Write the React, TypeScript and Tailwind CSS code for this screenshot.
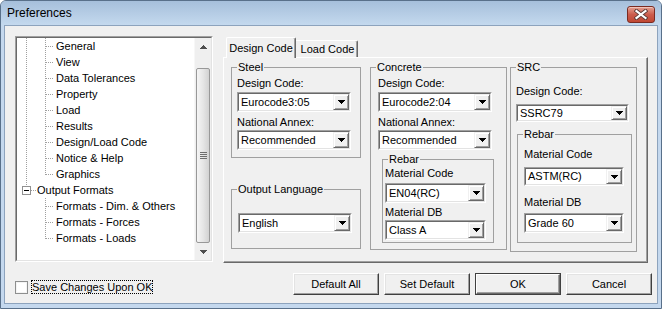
import React from "react";

const treeItems = [
  { label: "General", root: false, parentLine: true, last: false },
  { label: "View", root: false, parentLine: true, last: false },
  { label: "Data Tolerances", root: false, parentLine: true, last: false },
  { label: "Property", root: false, parentLine: true, last: false },
  { label: "Load", root: false, parentLine: true, last: false },
  { label: "Results", root: false, parentLine: true, last: false },
  { label: "Design/Load Code", root: false, parentLine: true, last: false },
  { label: "Notice & Help", root: false, parentLine: true, last: false },
  { label: "Graphics", root: false, parentLine: true, last: true },
  { label: "Output Formats", root: true, parentLine: false, last: true },
  { label: "Formats - Dim. & Others", root: false, parentLine: false, last: false },
  { label: "Formats - Forces", root: false, parentLine: false, last: false },
  { label: "Formats - Loads", root: false, parentLine: false, last: true },
];

const DOT = "#a0a0a0";

// tree connector drawing for one row
const TreeLines = ({ item }: { item: any }) => {
  if (item.root) {
    return (
      <svg width="20" height="16" className="shrink-0" shapeRendering="crispEdges">
        <line x1="9.5" y1="0" x2="9.5" y2="4" stroke={DOT} strokeDasharray="1 1" />
        <rect x="5.5" y="4.5" width="8" height="8" fill="#fff" stroke="#919191" />
        <line x1="7" y1="8.5" x2="12" y2="8.5" stroke="#000" />
        <line x1="14" y1="8.5" x2="19" y2="8.5" stroke={DOT} strokeDasharray="1 1" />
      </svg>
    );
  }
  return (
    <svg width="39" height="16" className="shrink-0" shapeRendering="crispEdges">
      {item.parentLine && (
        <line x1="9.5" y1="0" x2="9.5" y2="16" stroke={DOT} strokeDasharray="1 1" />
      )}
      <line x1="28.5" y1="0" x2="28.5" y2={item.last ? 9 : 16} stroke={DOT} strokeDasharray="1 1" />
      <line x1="29" y1="8.5" x2="37" y2="8.5" stroke={DOT} strokeDasharray="1 1" />
    </svg>
  );
};

const Arrow = ({ up = false, color = "#000" }: { up?: boolean; color?: string }) => (
  <svg width="7" height="4" shapeRendering="crispEdges">
    {up ? (
      <path d="M3 0h1v1h1v1h1v1h1v1H0V3h1V2h1V1h1z" fill={color} />
    ) : (
      <path d="M0 0h7v1H6v1H5v1H4v1H3V3H2V2H1V1H0z" fill={color} />
    )}
  </svg>
);

const Combo = ({ text, size }: { text: string; size: string }) => (
  <div className={`flex border border-t-[#a0a0a0] border-l-[#a0a0a0] border-r-white border-b-white ${size}`}>
    <div className="flex flex-1 border border-t-[#696969] border-l-[#696969] border-r-[#e3e3e3] border-b-[#e3e3e3] bg-white">
      <span className="flex-1 self-center pl-[2px] leading-[13px] text-black whitespace-nowrap">{text}</span>
      <div className="w-[16px] flex items-center justify-center bg-[#f0f0f0] border border-t-[#f0f0f0] border-l-[#f0f0f0] border-r-[#696969] border-b-[#696969] shadow-[inset_1px_1px_0_#fff,inset_-1px_-1px_0_#a0a0a0]">
        <Arrow />
      </div>
    </div>
  </div>
);

// group box: legend sits on the top border, content padded inside
const Group = ({ title, className, inner, children }: { title: string; className: string; inner: string; children?: React.ReactNode }) => (
  <fieldset className={`border border-[#a0a0a0] ${className}`}>
    <legend className="ml-[5px] px-[1px] leading-[13px] text-black">{title}</legend>
    <div className={inner}>{children}</div>
  </fieldset>
);

const Label = ({ text, className = "" }: { text: string; className?: string }) => (
  <div className={`leading-[13px] h-[13px] whitespace-nowrap ${className}`}>{text}</div>
);

const Button = ({ text, isDefault = false }: { text: string; isDefault?: boolean }) =>
  isDefault ? (
    <div className="w-[86px] h-[22px] border border-[#404040]">
      <div className="h-full flex items-center justify-center bg-[#f0f0f0] border border-t-white border-l-white border-r-[#696969] border-b-[#696969] shadow-[inset_-1px_-1px_0_#a0a0a0]">
        {text}
      </div>
    </div>
  ) : (
    <div className="w-[86px] h-[22px] flex items-center justify-center bg-[#f0f0f0] border border-t-white border-l-white border-r-[#404040] border-b-[#404040] shadow-[inset_-1px_-1px_0_#a0a0a0,inset_1px_1px_0_#e3e3e3]">
      {text}
    </div>
  );

const App = () => {
  return (
    <div className="w-[662px] h-[309px] flex flex-col bg-[#c4d8ee] border border-[#59708a] rounded-t-[6px] overflow-hidden font-[family-name:'Liberation_Sans',Arial,sans-serif] text-[11px] text-black">
      {/* title bar */}
      <div className="h-[24px] shrink-0 flex items-center bg-linear-to-b from-[#a6bfdb] to-[#c4d9ee]">
        <span className="pl-[6px] text-[12px] leading-[14px]">Preferences</span>
        <div className="ml-auto mr-[6px] mt-[3px] w-[28px] h-[17px] rounded-[3px] border border-[#7a2b22] bg-linear-to-b from-[#e3a092] via-[#cc5c4c] to-[#c04732] flex items-center justify-center shadow-[inset_0_1px_0_#f0c4ba]">
          <svg width="14" height="11">
            <path d="M2.5 2l9 7M11.5 2l-9 7" stroke="#5b3a36" strokeWidth="4" strokeLinecap="square" />
            <path d="M2.5 2l9 7M11.5 2l-9 7" stroke="#fff" strokeWidth="2.2" strokeLinecap="square" />
          </svg>
        </div>
      </div>

      {/* client area */}
      <div className="mx-[3px] mb-[4px] flex-1 flex flex-col border border-[#8da3bd] bg-[#f0f0f0] pl-[10px] pr-[5px] pt-[10px]">
        <div className="flex">
          {/* tree */}
          <div className="w-[198px] h-[226px] border border-t-[#a0a0a0] border-l-[#a0a0a0] border-r-white border-b-white">
            <div className="h-full flex border border-t-[#696969] border-l-[#696969] border-r-[#e3e3e3] border-b-[#e3e3e3] bg-white">
              <div className="flex-1 flex flex-col overflow-hidden">
                {treeItems.map((item) => (
                  <div key={item.label} className="h-[16px] flex items-center shrink-0">
                    <TreeLines item={item} />
                    <span className="leading-[16px] whitespace-nowrap">{item.label}</span>
                  </div>
                ))}
              </div>
              {/* scrollbar */}
              <div className="w-[17px] flex flex-col bg-[#efefef] border-l border-l-[#f7f7f7]">
                <div className="h-[17px] flex items-center justify-center">
                  <Arrow up color="#4d4d4d" />
                </div>
                <div className="flex-1 pt-[13px]">
                  <div className="h-[175px] mx-[1px] rounded-[2px] border border-[#989898] bg-linear-to-r from-[#f5f5f5] via-[#e6e6e6] to-[#d2d2d2] flex items-center justify-center">
                    <div className="flex flex-col gap-[1px]">
                      <div className="w-[7px] h-[1px] bg-[#6d6d6d]" />
                      <div className="w-[7px] h-[1px] bg-[#6d6d6d]" />
                      <div className="w-[7px] h-[1px] bg-[#6d6d6d]" />
                      <div className="w-[7px] h-[1px] bg-[#6d6d6d]" />
                    </div>
                  </div>
                </div>
                <div className="h-[16px] flex items-center justify-center">
                  <Arrow color="#4d4d4d" />
                </div>
              </div>
            </div>
          </div>

          {/* tabs */}
          <div className="ml-[10px] mt-[1px] w-[425px] flex flex-col">
            <div className="h-[20px] flex items-start">
              <div className="relative z-10 ml-[3px] w-[70px] h-[21px] bg-[#f0f0f0] border-t border-l border-r border-t-white border-l-white border-r-[#696969] rounded-t-[2px] shadow-[inset_-1px_0_0_#a0a0a0] flex items-center justify-center">
                Design Code
              </div>
              <div className="mt-[3px] w-[62px] h-[17px] bg-[#f0f0f0] border-t border-r border-t-white border-r-[#696969] rounded-tr-[2px] shadow-[inset_-1px_0_0_#a0a0a0] flex items-center justify-center pl-[2px]">
                Load Code
              </div>
            </div>
            <div className="h-[206px] flex border border-t-white border-l-white border-r-[#696969] border-b-[#696969] shadow-[inset_-1px_-1px_0_#a0a0a0] pt-[3px] pl-[7px]">
              {/* column 1 */}
              <div className="w-[130px] flex flex-col">
                <Group title="Steel" className="h-[97px]" inner="pl-[5px]">
                  <Label text="Design Code:" className="mt-[3px]" />
                  <Combo text="Eurocode3:05" size="mt-[2px] w-[114px] h-[20px]" />
                  <Label text="National Annex:" className="mt-[4px]" />
                  <Combo text="Recommended" size="mt-[1px] w-[114px] h-[20px]" />
                </Group>
                <Group title="Output Language" className="mt-[25px] h-[66px]" inner="pl-[6px]">
                  <Combo text="English" size="mt-[17px] w-[114px] h-[20px]" />
                </Group>
              </div>

              {/* column 2 */}
              <Group title="Concrete" className="ml-[9px] w-[137px] h-[189px]" inner="pl-[7px]">
                <Label text="Design Code:" className="mt-[3px]" />
                <Combo text="Eurocode2:04" size="mt-[2px] w-[114px] h-[20px]" />
                <Label text="National Annex:" className="mt-[4px]" />
                <Combo text="Recommended" size="mt-[1px] w-[114px] h-[20px]" />
                <Group title="Rebar" className="mt-[3px] ml-[4px] w-[112px] h-[90px]" inner="pl-[2px]">
                  <Label text="Material Code" className="mt-[1px]" />
                  <Combo text="EN04(RC)" size="mt-[3px] w-[101px] h-[20px]" />
                  <Label text="Material DB" className="mt-[3px]" />
                  <Combo text="Class A" size="mt-[1px] w-[101px] h-[20px]" />
                </Group>
              </Group>

              {/* column 3 */}
              <Group title="SRC" className="ml-[3px] w-[127px] h-[191px]" inner="pl-[5px]">
                <Label text="Design Code:" className="mt-[11px]" />
                <Combo text="SSRC79" size="mt-[6px] w-[113px] h-[18px]" />
                <Group title="Rebar" className="mt-[6px] ml-[1px] w-[115px] h-[115px]" inner="pl-[6px]">
                  <Label text="Material Code" className="mt-[7px]" />
                  <Combo text="ASTM(RC)" size="mt-[6px] w-[100px] h-[19px]" />
                  <Label text="Material DB" className="mt-[10px]" />
                  <Combo text="Grade 60" size="mt-[4px] w-[100px] h-[20px]" />
                </Group>
              </Group>
            </div>
          </div>
        </div>

        {/* bottom row */}
        <div className="mt-[10px] flex justify-between">
          <div className="flex items-start">
            <div className="mt-[8px] w-[13px] h-[13px] border border-[#8e8f8f] bg-white shadow-[inset_1px_1px_0_#f4f4f4,inset_-1px_-1px_0_#f4f4f4]" />
            <div className="mt-[7px] ml-[3px] h-[14px] border border-dotted border-black leading-[12px] whitespace-nowrap">
              Save Changes Upon OK
            </div>
          </div>
          <div className="flex gap-[5px]">
            <Button text="Default All" />
            <Button text="Set Default" />
            <Button text="OK" isDefault />
            <Button text="Cancel" />
          </div>
        </div>
      </div>
    </div>
  );
};

export default App;
